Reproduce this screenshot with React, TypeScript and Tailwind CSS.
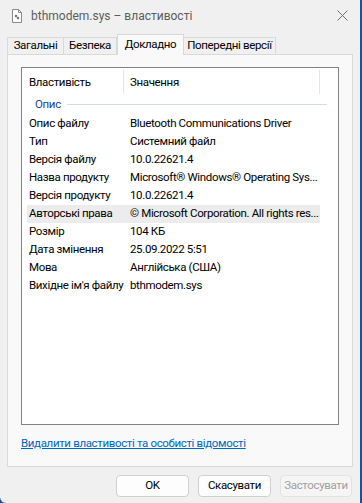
import React from "react";

const rows: [string, string][] = [
  ["Опис файлу", "Bluetooth Communications Driver"],
  ["Тип", "Системний файл"],
  ["Версія файлу", "10.0.22621.4"],
  ["Назва продукту", "Microsoft® Windows® Operating Sys..."],
  ["Версія продукту", "10.0.22621.4"],
  ["Авторські права", "© Microsoft Corporation. All rights res..."],
  ["Розмір", "104 КБ"],
  ["Дата змінення", "25.09.2022 5:51"],
  ["Мова", "Англійська (США)"],
  ["Вихідне ім'я файлу", "bthmodem.sys"],
];

function FileIcon() {
  return (
    <svg width="12" height="14" viewBox="0 0 12 14" fill="none">
      <path d="M1.5 0.5h6l3 3v10h-9z" fill="#fff" stroke="#8a8a8a" />
      <path d="M7.5 0.5v3h3" stroke="#8a8a8a" />
      <circle cx="5" cy="7" r="1.3" fill="#777" />
      <circle cx="7" cy="9" r="1.3" fill="#777" />
    </svg>
  );
}

function Tab({ label, w, active }: { label: string; w: string; active?: boolean }) {
  if (active) {
    return (
      <div className={`relative z-10 -mb-px flex h-[21px] items-center justify-center self-end border border-b-0 border-[#d9d9d9] bg-[#f9f9f9] ${w}`}>
        {label}
      </div>
    );
  }
  return (
    <div className={`-ml-px flex h-[17px] items-center justify-center self-end border border-b-0 border-[#d9d9d9] bg-[#f0f0f0] first:ml-0 ${w}`}>
      {label}
    </div>
  );
}

export default function App() {
  return (
    <div
      className="flex h-[503px] w-[362px] bg-[#1b4fa3] text-[11.5px] tracking-[-0.35px] text-black"
      style={{ fontFamily: "Roboto, 'Noto Sans', sans-serif" }}
    >
      <div className="flex h-full w-[360px] flex-col rounded-bl-[6px] bg-[#f0f0f0]">
        {/* title bar */}
        <div className="flex h-[31px] items-center pl-[11px] pr-[12px]">
          <FileIcon />
          <span className="ml-[8px] text-[12px] tracking-normal text-[#5c5c5c]">bthmodem.sys – властивості</span>
          <svg className="ml-auto" width="11" height="11" viewBox="0 0 11 11">
            <path d="M0.5 0.5l10 10M10.5 0.5l-10 10" stroke="#707070" strokeWidth="1" />
          </svg>
        </div>

        {/* tabs */}
        <div className="flex h-[23px] items-end pl-[7px] pt-[2px]">
          <Tab label="Загальні" w="w-[57px]" />
          <Tab label="Безпека" w="w-[54px]" />
          <Tab label="Докладно" w="w-[67px]" active />
          <Tab label="Попередні версії" w="w-[93px]" />
        </div>

        {/* panel */}
        <div className="ml-[7px] flex h-[413px] w-[346px] flex-col border border-[#d9d9d9] bg-[#f9f9f9] px-[13px] pt-[12px]">
          <div className="flex h-[358px] flex-col border border-[#838383] bg-white">
            <div className="flex h-[27px] items-stretch pt-[1px]">
              <div className="flex w-[101px] items-center pl-[7px] pt-[1px]">Властивість</div>
              <div className="my-[1px] w-px bg-[#e5e5e5]" />
              <div className="flex w-[195px] items-center pl-[6px] pt-[1px]">Значення</div>
              <div className="my-[1px] w-px bg-[#e5e5e5]" />
            </div>
            <div className="flex h-[18px] items-center pl-[13px] pr-[11px] pt-[1px]">
              <span className="text-[#1c3f94]">Опис</span>
              <div className="ml-[6px] h-px flex-1 bg-[#d2dde9]" />
            </div>
            <div className="mt-[2px] flex flex-col">
              {rows.map(([k, v], i) => (
                <div
                  key={k}
                  className={`mx-[5px] flex h-[18px] w-[293px] items-center ${i === 5 ? "bg-[#ececec]" : ""}`}
                >
                  <div className="w-[103px] whitespace-nowrap pl-[2px]">{k}</div>
                  <div className="whitespace-nowrap">{v}</div>
                </div>
              ))}
            </div>
          </div>
          <div className="mt-[10px] text-[#0067c0] underline">Видалити властивості та особисті відомості</div>
        </div>

        {/* buttons */}
        <div className="flex justify-end gap-[9px] pr-[8px] pt-[8px]">
          <button className="h-[22px] w-[73px] rounded-[4px] border border-[#d0d0d0] bg-[#fdfdfd]">OK</button>
          <button className="h-[22px] w-[73px] rounded-[4px] border border-[#d0d0d0] bg-[#fdfdfd]">Скасувати</button>
          <button className="h-[22px] w-[72px] rounded-[4px] border border-[#e3e3e3] bg-[#f5f5f5] text-[#a0a0a0]">Застосувати</button>
        </div>
      </div>
    </div>
  );
}
